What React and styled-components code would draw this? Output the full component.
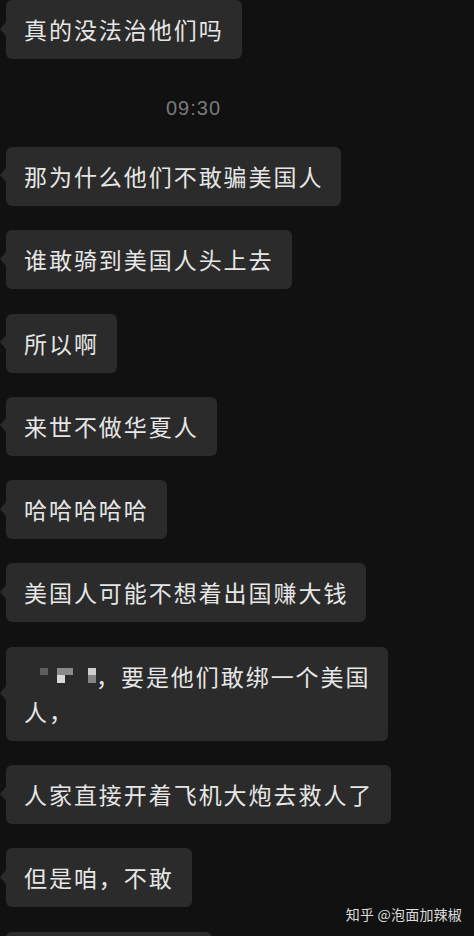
import React from 'react'
import styled, { createGlobalStyle } from 'styled-components'

const GlobalStyle = createGlobalStyle`
html, body {
  margin: 0;
  padding: 0;
  background: #111111;
}
body {
  width: 474px;
  height: 936px;
  overflow: hidden;
  font-family: "Noto Sans CJK SC", "Noto Sans", sans-serif;
}
`;

const Screen = styled.div`
position: relative;
width: 474px;
height: 936px;
overflow: hidden;
background: #111111;
`;

const Thread = styled.div`
display: flex;
flex-direction: column;
align-items: flex-start;
gap: 24.3px;
padding-left: 6px;
`;

const Bubble = styled.div`
position: relative;
box-sizing: border-box;
width: ${({ $width }) => ($width ? `${$width}px` : 'auto')};
max-width: 390px;
min-height: 59px;
padding: 12px 18px;
background: #2b2b2b;
border-radius: 6px;
color: #e6e6e6;
font-size: 23px;
line-height: 35px;
letter-spacing: 1.95px;
white-space: nowrap;
&::before {
  content: "";
  position: absolute;
  left: -6px;
  top: 50%;
  margin-top: -8px;
  border-top: 7px solid transparent;
  border-bottom: 7px solid transparent;
  border-right: 6px solid #2b2b2b;
}
`;

const TimeRow = styled.div`
box-sizing: border-box;
height: 39.4px;
padding: 14px 0 0 160px;
color: #7a7a7a;
font-family: "Liberation Sans", Arial, sans-serif;
font-size: 20px;
line-height: 22px;
letter-spacing: 1px;
`;

const Mosaic = styled.svg`
display: inline-block;
vertical-align: -3px;
width: 72px;
height: 24px;
`;

const Watermark = styled.div`
position: absolute;
right: 12px;
bottom: 12px;
color: #dcdcdc;
font-size: 14px;
line-height: 20px;
letter-spacing: 0.2px;
`;

const Blur = () => (
  <Mosaic viewBox="0 0 72 24">
    <rect x="16" y="3" width="8" height="7" fill="#5e5e5e" />
    <rect x="33" y="3" width="16" height="7" fill="#8a8a8a" />
    <rect x="33" y="10" width="8" height="8" fill="#d8d8d8" />
    <rect x="64" y="3" width="8" height="7" fill="#cfcfcf" />
    <rect x="64" y="10" width="8" height="8" fill="#858585" />
  </Mosaic>
);

const messages = [
  '那为什么他们不敢骗美国人',
  '谁敢骑到美国人头上去',
  '所以啊',
  '来世不做华夏人',
  '哈哈哈哈哈',
  '美国人可能不想着出国赚大钱',
];

const App = () => {
  return (
    <Screen>
      <GlobalStyle />
      <Thread>
        <Bubble>真的没法治他们吗</Bubble>
        <TimeRow>09:30</TimeRow>
        {messages.map((m) => (
          <Bubble key={m}>{m}</Bubble>
        ))}
        <Bubble>
          <Blur />，要是他们敢绑一个美国<br />人，
        </Bubble>
        <Bubble>人家直接开着飞机大炮去救人了</Bubble>
        <Bubble>但是咱，不敢</Bubble>
        <Bubble $width={206}>&nbsp;</Bubble>
      </Thread>
      <Watermark>知乎 @泡面加辣椒</Watermark>
    </Screen>
  );
};

export default App
